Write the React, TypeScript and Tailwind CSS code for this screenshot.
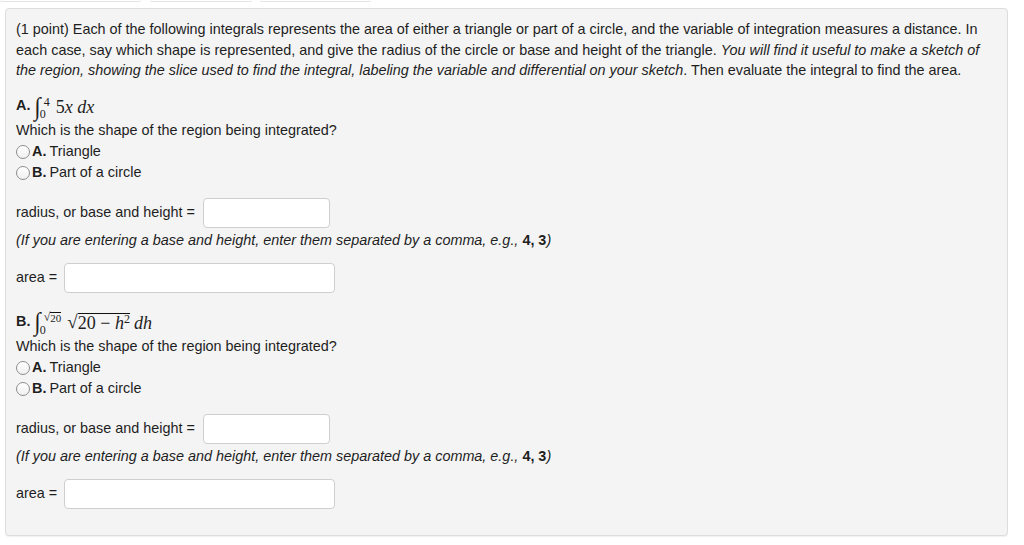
import React from "react";

function Radio() {
  return (
    <span className="inline-block w-[14px] h-[14px] rounded-full border border-[#8e8e8e] bg-gradient-to-b from-white to-[#f0f0f0] mr-[2px] shrink-0" />
  );
}

function Rad({ children, small }: { children: React.ReactNode; small?: boolean }) {
  return (
    <span className="inline-flex items-start">
      <span className={small ? "text-[12px] leading-[12px]" : "text-[19px] leading-[21px]"}>√</span>
      <span className={"border-t border-[#111] " + (small ? "text-[11px] leading-[11px] mt-[1px]" : "text-[18px] leading-[19px] mt-[2px]")}>
        {children}
      </span>
    </span>
  );
}

function Section({ letter, math }: { letter: string; math: React.ReactNode }) {
  return (
    <div>
      <div className="flex items-end h-[30px] pb-[1px]">
        <span className="font-bold mr-[4px] mb-[2px]">{letter}.</span>
        {math}
      </div>
      <div className="leading-[21px]">Which is the shape of the region being integrated?</div>
      <div className="flex items-center h-[21px] mt-[1px]">
        <Radio />
        <span className="font-bold mr-[3px]">A.</span>
        <span>Triangle</span>
      </div>
      <div className="flex items-center h-[21px]">
        <Radio />
        <span className="font-bold mr-[3px]">B.</span>
        <span>Part of a circle</span>
      </div>
      <div className="flex items-center mt-[14px] h-[30px]">
        <span>radius, or base and height =</span>
        <div className="ml-[8px] w-[127px] h-[30px] bg-white border border-[#cfcfcf] rounded-[4px]" />
      </div>
      <div className="italic leading-[21px] mt-[2px]">
        (If you are entering a base and height, enter them separated by a comma, e.g., <b className="not-italic font-bold">4, 3</b>)
      </div>
      <div className="flex items-center mt-[12px] h-[30px]">
        <span>area =</span>
        <div className="ml-[7px] w-[271px] h-[30px] bg-white border border-[#cfcfcf] rounded-[4px]" />
      </div>
    </div>
  );
}

function Integral({ sup, sub }: { sup: React.ReactNode; sub: React.ReactNode }) {
  return (
    <span className="inline-flex items-center mr-[6px]" style={{ fontFamily: '"Liberation Serif", serif' }}>
      <span className="inline-block italic text-[23px] leading-[24px] scale-y-[1.1]">∫</span>
      <span className="inline-flex flex-col -ml-[1px] text-[12px] leading-[12px] translate-y-[1px]">
        <span className="ml-[4px]">{sup}</span>
        <span>{sub}</span>
      </span>
    </span>
  );
}

export default function App() {
  const serif = { fontFamily: '"Liberation Serif", serif' };
  return (
    <div
      className="w-[1024px] h-[545px] bg-white text-[14.4px] text-[#1e1e1e] overflow-hidden"
      style={{ fontFamily: '"Liberation Sans", Arial, sans-serif' }}
    >
      <div className="flex h-[2px]">
        <div className="w-[141px] border-b border-[#e4e4e4] rounded-b-[3px]" />
        <div className="ml-[9px] w-[102px] border-b border-[#e4e4e4] rounded-b-[3px]" />
        <div className="ml-[8px] w-[111px] border-b border-[#e4e4e4] rounded-b-[3px]" />
      </div>
      <div className="ml-[5px] mt-[6px] w-[1003px] h-[528px] bg-[#f4f4f4] border border-[#dddddd] rounded-[4px] px-[10px] pt-[10px] shadow-[0_1px_1px_rgba(0,0,0,0.06)]">
        <p className="leading-[20.5px] pr-[4px]">
          (1 point) Each of the following integrals represents the area of either a triangle or part of a circle, and the variable of integration measures a distance. In each case, say which shape is represented, and give the radius of the circle or base and height of the triangle.{" "}
          <i>You will find it useful to make a sketch of the region, showing the slice used to find the integral, labeling the variable and differential on your sketch</i>. Then evaluate the integral to find the area.
        </p>
        <div className="mt-[9px]">
          <Section
            letter="A"
            math={
              <span className="inline-flex items-center" style={serif}>
                <Integral sup="4" sub="0" />
                <span className="text-[18px] leading-[20px]">
                  5<i>x</i> <i>dx</i>
                </span>
              </span>
            }
          />
        </div>
        <div className="mt-[13px]">
          <Section
            letter="B"
            math={
              <span className="inline-flex items-center" style={serif}>
                <Integral sup={<Rad small>20</Rad>} sub="0" />
                <span className="inline-flex items-end text-[18px] leading-[20px]">
                  <Rad>
                    20 − <i>h</i>
                    <sup className="text-[12px]">2</sup>
                  </Rad>
                  <span className="ml-[4px]">
                    <i>dh</i>
                  </span>
                </span>
              </span>
            }
          />
        </div>
      </div>
    </div>
  );
}
